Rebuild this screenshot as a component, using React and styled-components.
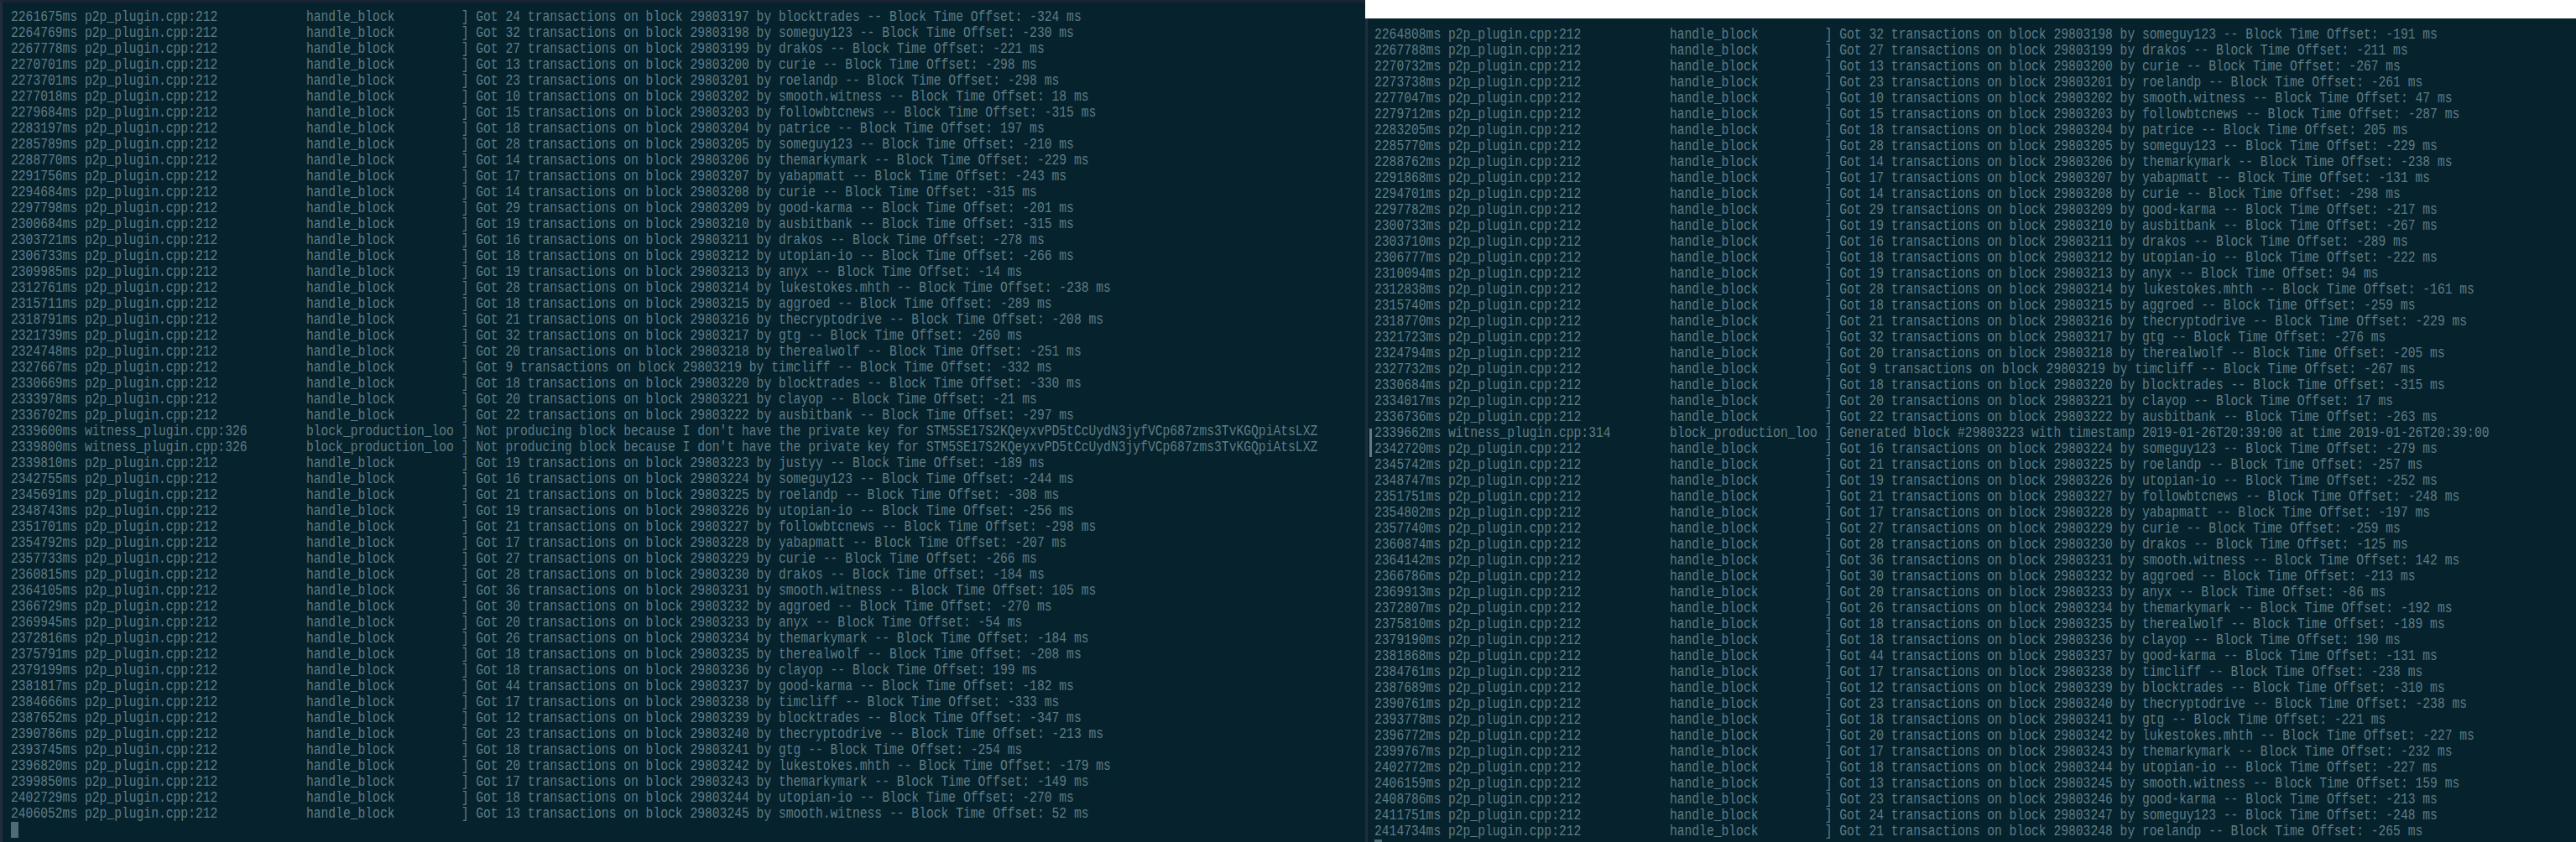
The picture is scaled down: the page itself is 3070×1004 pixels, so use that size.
import styled, { createGlobalStyle } from 'styled-components';

const GlobalStyle = createGlobalStyle`
  * {
    margin: 0;
    padding: 0;
    box-sizing: border-box;
  }
  html, body, #root {
    height: 100%;
    width: 100%;
    overflow: hidden;
    background-color: #ffffff;
  }
`;

const Desktop = styled.div`
  display: grid;
  grid-template-columns: 1627px 1fr;
  height: 1004px;
  width: 3070px;
`;

const Terminal = styled.div`
  position: relative;
  overflow: hidden;
  height: ${(p) => (p.$offsetTop ? `calc(100% - ${p.$offsetTop}px)` : '100%')};
  margin-top: ${(p) => p.$offsetTop || 0}px;
  background-color: #05222d;
  border-left: ${(p) => p.$edge}px solid #232c3d;
  border-top: ${(p) => (p.$offsetTop ? 0 : 3)}px solid #1b2334;
  padding: ${(p) => (p.$offsetTop ? 10 : 8)}px 0 0 ${(p) => p.$indent}px;
`;

// the capture uses a narrow terminal font, so the mono face is squeezed to 8.8px a cell
const LogLine = styled.pre`
  height: 19px;
  line-height: 19px;
  font-family: "Liberation Mono", monospace;
  font-size: 17.6px;
  color: #5f7c84;
  white-space: pre;
  transform: scaleX(0.8333);
  transform-origin: left center;
`;

const Cursor = styled.div`
  width: 9px;
  height: 19px;
  background-color: #4f6b73;
`;

const ScrollMark = styled.div`
  position: absolute;
  left: 2px;
  top: 489px;
  width: 3px;
  height: 34px;
  background-color: #5f7c84;
`;

const block = (ms, count, num, by, offset) =>
  `${ms}ms ${'p2p_plugin.cpp:212'.padEnd(30)}${'handle_block'.padEnd(21)}] Got ${count} transactions on block 29803${num} by ${by} -- Block Time Offset: ${offset} ms`;

const witness = (ms, line, msg) =>
  `${ms}ms ${`witness_plugin.cpp:${line}`.padEnd(30)}${'block_production_loo'.padEnd(21)}] ${msg}`;

const noKey = "Not producing block because I don't have the private key for STM5SE17S2KQeyxvPD5tCcUydN3jyfVCp687zms3TvKGQpiAtsLXZ";

const leftLog = [
  [2261675, 24, 197, 'blocktrades', -324],
  [2264769, 32, 198, 'someguy123', -230],
  [2267778, 27, 199, 'drakos', -221],
  [2270701, 13, 200, 'curie', -298],
  [2273701, 23, 201, 'roelandp', -298],
  [2277018, 10, 202, 'smooth.witness', 18],
  [2279684, 15, 203, 'followbtcnews', -315],
  [2283197, 18, 204, 'patrice', 197],
  [2285789, 28, 205, 'someguy123', -210],
  [2288770, 14, 206, 'themarkymark', -229],
  [2291756, 17, 207, 'yabapmatt', -243],
  [2294684, 14, 208, 'curie', -315],
  [2297798, 29, 209, 'good-karma', -201],
  [2300684, 19, 210, 'ausbitbank', -315],
  [2303721, 16, 211, 'drakos', -278],
  [2306733, 18, 212, 'utopian-io', -266],
  [2309985, 19, 213, 'anyx', -14],
  [2312761, 28, 214, 'lukestokes.mhth', -238],
  [2315711, 18, 215, 'aggroed', -289],
  [2318791, 21, 216, 'thecryptodrive', -208],
  [2321739, 32, 217, 'gtg', -260],
  [2324748, 20, 218, 'therealwolf', -251],
  [2327667, 9, 219, 'timcliff', -332],
  [2330669, 18, 220, 'blocktrades', -330],
  [2333978, 20, 221, 'clayop', -21],
  [2336702, 22, 222, 'ausbitbank', -297],
  witness(2339600, 326, noKey),
  witness(2339800, 326, noKey),
  [2339810, 19, 223, 'justyy', -189],
  [2342755, 16, 224, 'someguy123', -244],
  [2345691, 21, 225, 'roelandp', -308],
  [2348743, 19, 226, 'utopian-io', -256],
  [2351701, 21, 227, 'followbtcnews', -298],
  [2354792, 17, 228, 'yabapmatt', -207],
  [2357733, 27, 229, 'curie', -266],
  [2360815, 28, 230, 'drakos', -184],
  [2364105, 36, 231, 'smooth.witness', 105],
  [2366729, 30, 232, 'aggroed', -270],
  [2369945, 20, 233, 'anyx', -54],
  [2372816, 26, 234, 'themarkymark', -184],
  [2375791, 18, 235, 'therealwolf', -208],
  [2379199, 18, 236, 'clayop', 199],
  [2381817, 44, 237, 'good-karma', -182],
  [2384666, 17, 238, 'timcliff', -333],
  [2387652, 12, 239, 'blocktrades', -347],
  [2390786, 23, 240, 'thecryptodrive', -213],
  [2393745, 18, 241, 'gtg', -254],
  [2396820, 20, 242, 'lukestokes.mhth', -179],
  [2399850, 17, 243, 'themarkymark', -149],
  [2402729, 18, 244, 'utopian-io', -270],
  [2406052, 13, 245, 'smooth.witness', 52],
];

const rightLog = [
  [2264808, 32, 198, 'someguy123', -191],
  [2267788, 27, 199, 'drakos', -211],
  [2270732, 13, 200, 'curie', -267],
  [2273738, 23, 201, 'roelandp', -261],
  [2277047, 10, 202, 'smooth.witness', 47],
  [2279712, 15, 203, 'followbtcnews', -287],
  [2283205, 18, 204, 'patrice', 205],
  [2285770, 28, 205, 'someguy123', -229],
  [2288762, 14, 206, 'themarkymark', -238],
  [2291868, 17, 207, 'yabapmatt', -131],
  [2294701, 14, 208, 'curie', -298],
  [2297782, 29, 209, 'good-karma', -217],
  [2300733, 19, 210, 'ausbitbank', -267],
  [2303710, 16, 211, 'drakos', -289],
  [2306777, 18, 212, 'utopian-io', -222],
  [2310094, 19, 213, 'anyx', 94],
  [2312838, 28, 214, 'lukestokes.mhth', -161],
  [2315740, 18, 215, 'aggroed', -259],
  [2318770, 21, 216, 'thecryptodrive', -229],
  [2321723, 32, 217, 'gtg', -276],
  [2324794, 20, 218, 'therealwolf', -205],
  [2327732, 9, 219, 'timcliff', -267],
  [2330684, 18, 220, 'blocktrades', -315],
  [2334017, 20, 221, 'clayop', 17],
  [2336736, 22, 222, 'ausbitbank', -263],
  witness(2339662, 314, 'Generated block #29803223 with timestamp 2019-01-26T20:39:00 at time 2019-01-26T20:39:00'),
  [2342720, 16, 224, 'someguy123', -279],
  [2345742, 21, 225, 'roelandp', -257],
  [2348747, 19, 226, 'utopian-io', -252],
  [2351751, 21, 227, 'followbtcnews', -248],
  [2354802, 17, 228, 'yabapmatt', -197],
  [2357740, 27, 229, 'curie', -259],
  [2360874, 28, 230, 'drakos', -125],
  [2364142, 36, 231, 'smooth.witness', 142],
  [2366786, 30, 232, 'aggroed', -213],
  [2369913, 20, 233, 'anyx', -86],
  [2372807, 26, 234, 'themarkymark', -192],
  [2375810, 18, 235, 'therealwolf', -189],
  [2379190, 18, 236, 'clayop', 190],
  [2381868, 44, 237, 'good-karma', -131],
  [2384761, 17, 238, 'timcliff', -238],
  [2387689, 12, 239, 'blocktrades', -310],
  [2390761, 23, 240, 'thecryptodrive', -238],
  [2393778, 18, 241, 'gtg', -221],
  [2396772, 20, 242, 'lukestokes.mhth', -227],
  [2399767, 17, 243, 'themarkymark', -232],
  [2402772, 18, 244, 'utopian-io', -227],
  [2406159, 13, 245, 'smooth.witness', 159],
  [2408786, 23, 246, 'good-karma', -213],
  [2411751, 24, 247, 'someguy123', -248],
  [2414734, 21, 248, 'roelandp', -265],
];

const toLine = (row) => (typeof row === 'string' ? row : block(...row));

export default function App() {
  return (
    <>
      <GlobalStyle />
      <Desktop>
        <Terminal $edge={3} $indent={10}>
          {leftLog.map((row, i) => <LogLine key={i}>{toLine(row)}</LogLine>)}
          <Cursor />
        </Terminal>
        <Terminal $edge={3} $indent={8} $offsetTop={22}>
          {rightLog.map((row, i) => <LogLine key={i}>{toLine(row)}</LogLine>)}
          <Cursor />
          <ScrollMark />
        </Terminal>
      </Desktop>
    </>
  );
}
